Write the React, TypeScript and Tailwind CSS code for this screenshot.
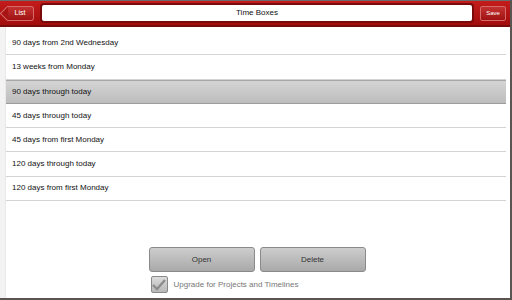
const rows = [
  "90 days from 2nd Wednesday",
  "13 weeks from Monday",
  "90 days through today",
  "45 days through today",
  "45 days from first Monday",
  "120 days through today",
  "120 days from first Monday",
];

export default function App() {
  return (
    <div
      className="w-[512px] h-[300px] flex flex-col bg-white overflow-hidden border-r-2 border-b-2 border-[#5a5550]"
      style={{ fontFamily: '"Liberation Sans", Arial, sans-serif' }}
    >
      {/* Header bar */}
      <div className="h-[27px] shrink-0 flex items-center gap-[6px] pl-[5px] pr-[4px] border-t border-[#6b6b6b] border-b-2 border-b-[#7a0a0a] bg-gradient-to-b from-[#c41c1c] to-[#a10c0c]">
        <div className="relative h-[15px] w-[28px] flex items-center justify-center ml-[1px]">
          <div className="absolute left-[-4px] top-[2px] w-[11px] h-[11px] rotate-45 bg-[#a81414] border-l border-b border-[#d86a6a]" />
          <div className="absolute inset-0 left-[2px] rounded-r-[3px] bg-gradient-to-b from-[#c43030] to-[#a01212] border-t border-r border-b border-[#d86a6a]" />
          <span className="relative text-[7px] text-white">List</span>
        </div>
        <div className="flex-1 h-[20px] bg-white rounded-[4px] border-2 border-[#7a0a0a] flex items-center justify-center text-[8px] text-[#111]">
          Time Boxes
        </div>
        <div className="w-[26px] h-[15px] rounded-[2px] bg-gradient-to-b from-[#c43030] to-[#a01212] border border-[#d86a6a] flex items-center justify-center text-[6px] text-white">
          Save
        </div>
      </div>

      {/* Body */}
      <div className="flex-1 flex">
        <div className="w-[6px] shrink-0 bg-[#f3f3f3] border-r border-[#e8e8e8]" />
        <div className="flex-1 flex flex-col pr-[4px]">
          <div className="flex flex-col pt-[4px]">
            {rows.map((r, i) => (
              <div
                key={i}
                className={
                  i === 2
                    ? "h-[24.3px] flex items-center pl-[6px] text-[8px] text-[#111] bg-gradient-to-b from-[#d4d4d4] to-[#bdbdbd] border-t border-[#a8a8a8] border-b border-b-[#9c9c9c]"
                    : "h-[24.3px] flex items-center pl-[6px] text-[8px] text-[#111] border-b border-[#d4d4d4]"
                }
              >
                {r}
              </div>
            ))}
          </div>

          <div className="flex-1 flex flex-col items-center justify-end pb-[5px] pl-[2px]">
            <div className="flex gap-[5px]">
              <button className="w-[106px] h-[25px] rounded-[3px] border border-[#8a8a8a] bg-gradient-to-b from-[#cdcdcd] to-[#a9a9a9] text-[8px] text-[#333]">
                Open
              </button>
              <button className="w-[106px] h-[25px] rounded-[3px] border border-[#8a8a8a] bg-gradient-to-b from-[#cdcdcd] to-[#a9a9a9] text-[8px] text-[#333]">
                Delete
              </button>
            </div>
            <div className="flex items-center gap-[6px] mt-[4px] w-[217px] pl-[2px]">
              <div className="w-[17px] h-[17px] rounded-[2px] border border-[#8a8a8a] bg-gradient-to-b from-[#dcdcdc] to-[#b8b8b8] flex items-center justify-center">
                <svg width="14" height="12" viewBox="0 0 14 12">
                  <path d="M1 6 L5 10 L13 1" fill="none" stroke="#8c8c8c" strokeWidth="2.4" />
                </svg>
              </div>
              <span className="text-[8px] text-[#777]">Upgrade for Projects and Timelines</span>
            </div>
          </div>
        </div>
      </div>
    </div>
  );
}
